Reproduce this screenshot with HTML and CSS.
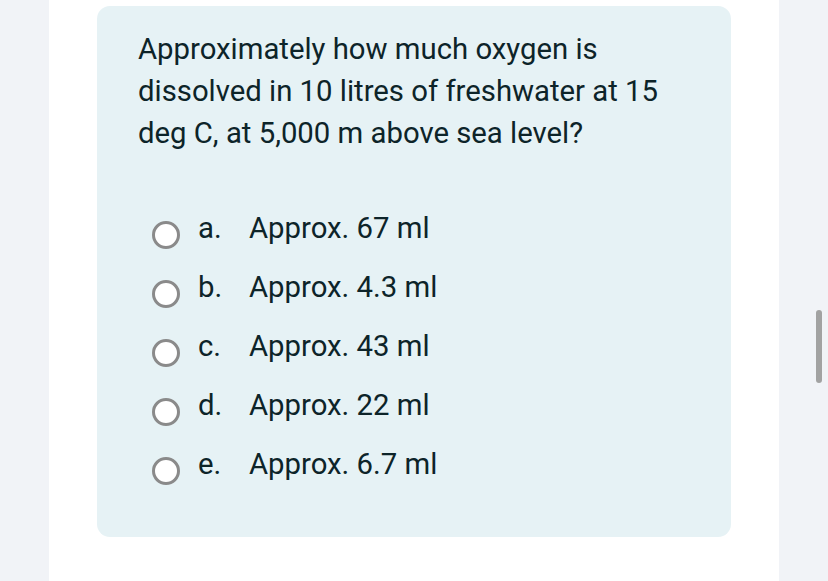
FILE: index.html
```html
<!DOCTYPE html>
<html lang="en">
<head>
<meta charset="utf-8">
<title>Question</title>
<link rel="stylesheet" href="styles.css">
</head>
<body>
<div class="page">
  <div class="card">
    <p class="question">Approximately how much oxygen is dissolved in 10 litres of freshwater at 15 deg C, at 5,000 m above sea level?</p>
    <ul class="options">
      <li class="option"><span class="radio"></span><span class="letter">a.</span><span class="answer">Approx. 67 ml</span></li>
      <li class="option"><span class="radio"></span><span class="letter">b.</span><span class="answer">Approx. 4.3 ml</span></li>
      <li class="option"><span class="radio"></span><span class="letter">c.</span><span class="answer">Approx. 43 ml</span></li>
      <li class="option"><span class="radio"></span><span class="letter">d.</span><span class="answer">Approx. 22 ml</span></li>
      <li class="option"><span class="radio"></span><span class="letter">e.</span><span class="answer">Approx. 6.7 ml</span></li>
    </ul>
  </div>
</div>
<div class="scroll-thumb"></div>
</body>
</html>
```
FILE: styles.css
```css
html, body {
  margin: 0;
  padding: 0;
}
body {
  background: #f1f3f7;
  font-family: Roboto, "Noto Sans", sans-serif;
  color: #0d2429;
  height: 581px;
  overflow: hidden;
}
.page {
  width: 730px;
  margin: 0 auto;
  background: #ffffff;
  height: 581px;
  padding: 6px 48px 0;
  box-sizing: border-box;
}
.card {
  background: #e6f2f5;
  border-radius: 13px;
  height: 531px;
  box-sizing: border-box;
  padding: 22px 41px 0;
}
.question {
  margin: 0;
  font-size: 29.3px;
  line-height: 42px;
}
.options {
  list-style: none;
  margin: 53px 0 0;
  padding: 0 0 0 14px;
  display: flex;
  flex-direction: column;
  gap: 17px;
}
.option {
  display: flex;
  align-items: center;
  height: 42px;
  font-size: 29.3px;
}
.radio {
  width: 28px;
  height: 28px;
  box-sizing: border-box;
  border: 3px solid #8a8a8a;
  border-radius: 50%;
  background: #ffffff;
  margin: 13px 18px 0 0;
  flex: none;
}
.letter {
  width: 51px;
}
.scroll-thumb {
  position: absolute;
  left: 816px;
  top: 310px;
  width: 6px;
  height: 73px;
  border-radius: 3px;
  background: #a2a2a2;
}
```
